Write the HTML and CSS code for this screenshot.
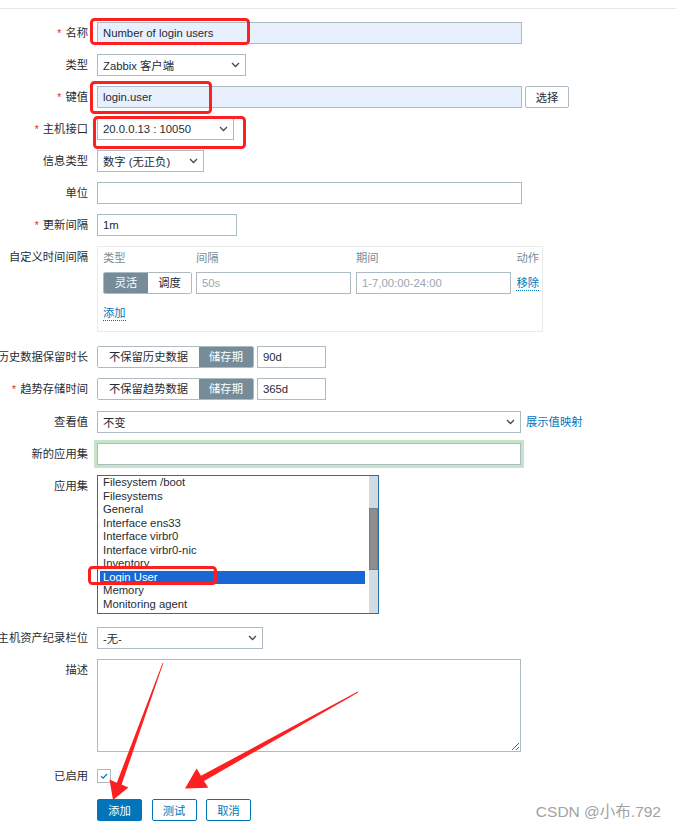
FILE: index.html
```html
<!DOCTYPE html>
<html>
<head>
    <meta charset="UTF-8">
    <title>监控项</title>
    <link rel="stylesheet" href="styles.css">
</head>
<body>
    <div class="topbar"></div>

    <form class="item-form">
        <div class="row">
            <label class="label"><span class="req">*</span>名称</label>
            <input class="input w-wide filled" value="Number of login users">
        </div>

        <div class="row">
            <label class="label">类型</label>
            <div class="select w-type"><span>Zabbix 客户端</span><svg class="chev" viewBox="0 0 9 6"><path d="M1 1l3.5 3.5L8 1"/></svg></div>
        </div>

        <div class="row">
            <label class="label"><span class="req">*</span>键值</label>
            <input class="input w-wide filled" value="login.user">
            <button type="button" class="btn-plain">选择</button>
        </div>

        <div class="row">
            <label class="label"><span class="req">*</span>主机接口</label>
            <div class="select w-host"><span>20.0.0.13 : 10050</span><svg class="chev" viewBox="0 0 9 6"><path d="M1 1l3.5 3.5L8 1"/></svg></div>
        </div>

        <div class="row">
            <label class="label">信息类型</label>
            <div class="select w-info"><span>数字 (无正负)</span><svg class="chev" viewBox="0 0 9 6"><path d="M1 1l3.5 3.5L8 1"/></svg></div>
        </div>

        <div class="row">
            <label class="label">单位</label>
            <input class="input w-wide" value="">
        </div>

        <div class="row">
            <label class="label"><span class="req">*</span>更新间隔</label>
            <input class="input w-delay" value="1m">
        </div>

        <div class="row row-intervals">
            <label class="label">自定义时间间隔</label>
            <div class="intervals">
                <div class="iv-head">
                    <span class="c1">类型</span>
                    <span class="c2">间隔</span>
                    <span class="c3">期间</span>
                    <span class="c4">动作</span>
                </div>
                <div class="iv-row">
                    <div class="seg c1">
                        <span class="on w-45">灵活</span>
                        <span class="w-44">调度</span>
                    </div>
                    <input class="input c2 muted" value="50s">
                    <input class="input c3 muted" value="1-7,00:00-24:00">
                    <div class="c4"><a class="link dotted">移除</a></div>
                </div>
                <a class="link dotted add">添加</a>
            </div>
        </div>

        <div class="row row-history">
            <label class="label">历史数据保留时长</label>
            <div class="seg">
                <span class="w-101">不保留历史数据</span>
                <span class="on w-55">储存期</span>
            </div>
            <input class="input w-period" value="90d">
        </div>

        <div class="row row-trends">
            <label class="label"><span class="req">*</span>趋势存储时间</label>
            <div class="seg">
                <span class="w-101">不保留趋势数据</span>
                <span class="on w-55">储存期</span>
            </div>
            <input class="input w-period" value="365d">
        </div>

        <div class="row">
            <label class="label">查看值</label>
            <div class="select w-full"><span>不变</span><svg class="chev" viewBox="0 0 9 6"><path d="M1 1l3.5 3.5L8 1"/></svg></div>
            <a class="link side">展示值映射</a>
        </div>

        <div class="row">
            <label class="label">新的应用集</label>
            <input class="input w-full focus" value="">
        </div>

        <div class="row row-apps">
            <label class="label">应用集</label>
            <div class="listbox">
                <div class="options">
                    <div class="opt">Filesystem /boot</div>
                    <div class="opt">Filesystems</div>
                    <div class="opt">General</div>
                    <div class="opt">Interface ens33</div>
                    <div class="opt">Interface virbr0</div>
                    <div class="opt">Interface virbr0-nic</div>
                    <div class="opt">Inventory</div>
                    <div class="opt sel">Login User</div>
                    <div class="opt">Memory</div>
                    <div class="opt">Monitoring agent</div>
                    <div class="opt">Network interfaces</div>
                </div>
                <div class="scrollbar"><div class="thumb"></div></div>
            </div>
        </div>

        <div class="row">
            <label class="label">主机资产纪录栏位</label>
            <div class="select w-inv"><span>-无-</span><svg class="chev" viewBox="0 0 9 6"><path d="M1 1l3.5 3.5L8 1"/></svg></div>
        </div>

        <div class="row row-desc">
            <label class="label">描述</label>
            <textarea class="textarea"></textarea>
        </div>

        <div class="row row-enabled">
            <label class="label">已启用</label>
            <div class="checkbox"><svg viewBox="0 0 14 14"><path d="M3.5 7.2l2.4 2.3 4.6-4.8"/></svg></div>
        </div>

        <div class="buttons">
            <button type="button" class="btn primary">添加</button>
            <button type="button" class="btn">测试</button>
            <button type="button" class="btn">取消</button>
        </div>
    </form>

    <!-- screenshot annotations -->
    <svg class="annot" viewBox="0 0 676 829">
        <rect x="91.5" y="19.5" width="157" height="24" rx="3"/>
        <rect x="91.5" y="82.5" width="119" height="30" rx="3"/>
        <rect x="94.5" y="117.5" width="150" height="30" rx="3"/>
        <rect x="89.5" y="567.5" width="126" height="16" rx="3"/>
        <polygon class="arrow" points="163.4,663 121.6,784.6 128.4,787.4 113,800 109.5,779.6 116.8,782.8 162.6,663"/>
        <polygon class="arrow" points="358.2,692.4 204,781 208.3,787.8 185,788.5 196.6,768.6 201,775.8 357.8,691.6"/>
    </svg>

    <div class="watermark">CSDN @小布.792</div>
</body>
</html>
```

FILE: styles.css
```css
* {
    box-sizing: border-box;
}

body {
    margin: 0;
    width: 676px;
    height: 829px;
    overflow: hidden;
    position: relative;
    background: #fff;
    color: #1f2c33;
    font-family: "Liberation Sans", "Noto Sans CJK SC", sans-serif;
    font-size: 11.3px;
}

.topbar {
    height: 9px;
    border-bottom: 1px solid #e6e6e6;
}

.item-form {
    padding-top: 13px;
}

.row {
    display: flex;
    align-items: flex-start;
    margin-bottom: 10px;
}

.label {
    width: 88px;
    flex-shrink: 0;
    margin-right: 9px;
    display: flex;
    justify-content: flex-end;
    white-space: nowrap;
    line-height: 22px;
}

.req {
    color: #e33734;
    margin-right: 4px;
}

/* inputs */
.input {
    height: 22px;
    margin: 0;
    padding: 0 5px;
    border: 1px solid #acbbc2;
    border-radius: 0;
    background: #fff;
    color: #1f2c33;
    font: inherit;
    outline: none;
}

.input.filled {
    background: #e8f0fe;
}

.input.muted {
    color: #9aa7ae;
}

.input.focus {
    box-shadow: 0 0 0 3px #c6e4c6;
}

.w-wide { width: 425px; }
.w-full { width: 424px; }
.w-delay { width: 140px; }
.w-period { width: 69px; margin-left: 3px; }

.select {
    height: 22px;
    display: flex;
    align-items: center;
    justify-content: space-between;
    padding: 0 5px 0 5px;
    border: 1px solid #acbbc2;
    background: #fff;
    white-space: nowrap;
}

.chev {
    width: 9px;
    height: 6px;
    fill: none;
    stroke: #3d4a52;
    stroke-width: 1.3;
}

.w-type { width: 149px; }
.w-host { width: 137px; }
.w-info { width: 107px; }
.w-inv { width: 166px; }

.btn-plain {
    width: 44px;
    height: 22px;
    margin-left: 3px;
    border: 1px solid #acbbc2;
    border-radius: 2px;
    background: #fff;
    color: #1f2c33;
    font: inherit;
    padding: 0;
}

/* segmented radio */
.seg {
    display: flex;
    height: 22px;
    border: 1px solid #acbbc2;
    border-radius: 2px;
    overflow: hidden;
}

.seg span {
    line-height: 20px;
    text-align: center;
    background: #fff;
}

.seg span.on {
    background: #768d99;
    color: #fff;
}

.w-45 { width: 44px; }
.w-44 { width: 43px; }
.w-101 { width: 101px; }
.w-55 { width: 54px; }

.link {
    color: #0275b8;
    cursor: pointer;
}

.link.dotted {
    border-bottom: 1px dotted #0275b8;
}

.link.side {
    margin-left: 5px;
    line-height: 22px;
}

/* custom intervals */
.intervals {
    width: 446px;
    height: 86px;
    border: 1px solid #ebebeb;
    padding: 2px 3px 0 5px;
}

.iv-head {
    display: flex;
    height: 18px;
    line-height: 18px;
    color: #768d99;
}

.iv-row {
    display: flex;
    margin-top: 5px;
}

.c1 { width: 89px; flex-shrink: 0; margin-right: 4px; }
.c2 { width: 155px; flex-shrink: 0; margin-right: 5px; }
.c3 { width: 155px; flex-shrink: 0; margin-right: 5px; }

.c4 {
    flex: 1;
    min-width: 0;
    display: flex;
    justify-content: flex-end;
    white-space: nowrap;
}

.iv-row .c4 {
    align-items: flex-start;
    padding-top: 4px;
    line-height: 14px;
}

.intervals .add {
    display: inline-block;
    margin-top: 12px;
    line-height: 14px;
}

.row-history { margin-top: 14px; }
.row-trends { margin-bottom: 11px; }

/* applications list */
.listbox {
    width: 282px;
    height: 139px;
    display: flex;
    border: 1px solid #2a6ea6;
    overflow: hidden;
    background: #fff;
}

.options {
    flex: 1;
    padding: 0 4px 0 2px;
    overflow: hidden;
}

.opt {
    height: 13.5px;
    line-height: 13.5px;
    padding-left: 3px;
    white-space: nowrap;
}

.opt.sel {
    background: #1967d2;
    color: #fff;
}

.scrollbar {
    width: 9px;
    background: #d2dbe1;
}

.thumb {
    margin-top: 32px;
    height: 62px;
    background: #8e8e8e;
    border: 1px solid #7c7c7c;
}

.row-apps { margin-bottom: 13px; }

.textarea {
    width: 424px;
    height: 93px;
    margin: 0;
    border: 1px solid #acbbc2;
    border-radius: 0;
    font: inherit;
    resize: both;
    outline: none;
}

.row-desc { margin-bottom: 13px; }

.checkbox {
    width: 14px;
    height: 14px;
    margin-top: 4px;
    border: 1px solid #acbbc2;
    background: #fff;
}

.checkbox svg {
    display: block;
    width: 12px;
    height: 12px;
    fill: none;
    stroke: #0275b8;
    stroke-width: 1.4;
}

.row-enabled { margin-bottom: 12px; }

.buttons {
    display: flex;
    gap: 9.5px;
    margin-left: 97px;
}

.btn {
    width: 45px;
    height: 22px;
    padding: 0;
    border: 1px solid #0275b8;
    border-radius: 2px;
    background: #fff;
    color: #0275b8;
    font: inherit;
}

.btn.primary {
    background: #0275b8;
    color: #fff;
}

/* annotations drawn on top of the screenshot */
.annot {
    position: absolute;
    left: 0;
    top: 0;
    width: 676px;
    height: 829px;
    pointer-events: none;
}

.annot rect {
    fill: none;
    stroke: #fe2020;
    stroke-width: 3;
}

.annot .arrow {
    fill: #fe2020;
}

.watermark {
    position: absolute;
    right: 15px;
    top: 803px;
    font-size: 15.5px;
    line-height: 18px;
    color: #a2a2a2;
    white-space: nowrap;
}
```
